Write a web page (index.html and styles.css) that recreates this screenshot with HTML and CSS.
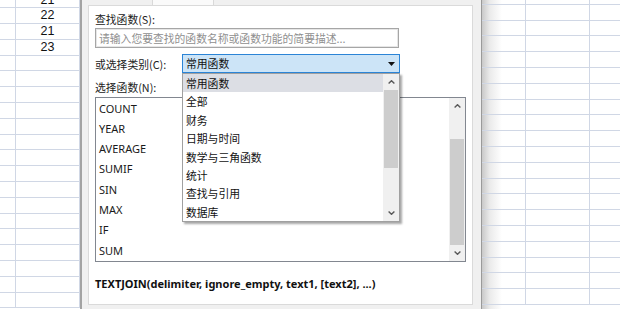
FILE: index.html
```html
<!DOCTYPE html>
<html lang="zh-CN">
<head>
<meta charset="utf-8">
<title>插入函数</title>
<link rel="stylesheet" href="styles.css">
</head>
<body>
<div class="screen">
  <div class="sheet sheet-left">
    <div class="row"><div class="cell c-a"></div><div class="cell c-b">21</div></div>
    <div class="row"><div class="cell c-a"></div><div class="cell c-b">22</div></div>
    <div class="row"><div class="cell c-a"></div><div class="cell c-b">21</div></div>
    <div class="row"><div class="cell c-a"></div><div class="cell c-b">23</div></div>
    <div class="row"><div class="cell c-a"></div><div class="cell c-b"></div></div>
    <div class="row"><div class="cell c-a"></div><div class="cell c-b"></div></div>
    <div class="row"><div class="cell c-a"></div><div class="cell c-b"></div></div>
    <div class="row"><div class="cell c-a"></div><div class="cell c-b"></div></div>
    <div class="row"><div class="cell c-a"></div><div class="cell c-b"></div></div>
    <div class="row"><div class="cell c-a"></div><div class="cell c-b"></div></div>
    <div class="row"><div class="cell c-a"></div><div class="cell c-b"></div></div>
    <div class="row"><div class="cell c-a"></div><div class="cell c-b"></div></div>
    <div class="row"><div class="cell c-a"></div><div class="cell c-b"></div></div>
    <div class="row"><div class="cell c-a"></div><div class="cell c-b"></div></div>
    <div class="row"><div class="cell c-a"></div><div class="cell c-b"></div></div>
    <div class="row"><div class="cell c-a"></div><div class="cell c-b"></div></div>
    <div class="row"><div class="cell c-a"></div><div class="cell c-b"></div></div>
    <div class="row"><div class="cell c-a"></div><div class="cell c-b"></div></div>
    <div class="row"><div class="cell c-a"></div><div class="cell c-b"></div></div>
    <div class="row"><div class="cell c-a"></div><div class="cell c-b"></div></div>
  </div>

  <div class="dialog">
    <div class="tabs">
      <div class="tab tab-a"></div>
      <div class="tab tab-b"></div>
    </div>
    <div class="panel">
      <div class="label">查找函数(S):</div>
      <div class="search">请输入您要查找的函数名称或函数功能的简要描述...</div>

      <div class="cat-row">
        <div class="label cat-label">或选择类别(C):</div>
        <div class="select">
          <span class="select-text">常用函数</span>
          <svg class="caret" width="7" height="4" viewBox="0 0 7 4"><polygon points="0,0 7,0 3.5,4" fill="#111"/></svg>
          <div class="dropdown">
            <ul class="dd-list">
              <li class="dd-item active">常用函数</li>
              <li class="dd-item">全部</li>
              <li class="dd-item">财务</li>
              <li class="dd-item">日期与时间</li>
              <li class="dd-item">数学与三角函数</li>
              <li class="dd-item">统计</li>
              <li class="dd-item">查找与引用</li>
              <li class="dd-item">数据库</li>
            </ul>
            <div class="scrollbar dd-scroll">
              <div class="arrow"><svg width="7" height="4" viewBox="0 0 7 4"><polyline points="0.6,3.5 3.5,0.7 6.4,3.5" fill="none" stroke="#5a5a5a" stroke-width="1.4"/></svg></div>
              <div class="track"><div class="thumb dd-thumb"></div></div>
              <div class="arrow"><svg width="7" height="4" viewBox="0 0 7 4"><polyline points="0.6,0.5 3.5,3.3 6.4,0.5" fill="none" stroke="#5a5a5a" stroke-width="1.4"/></svg></div>
            </div>
          </div>
        </div>
      </div>

      <div class="label fn-label">选择函数(N):</div>
      <div class="listbox">
        <ul class="fn-list">
          <li class="fn-item">COUNT</li>
          <li class="fn-item">YEAR</li>
          <li class="fn-item">AVERAGE</li>
          <li class="fn-item">SUMIF</li>
          <li class="fn-item">SIN</li>
          <li class="fn-item">MAX</li>
          <li class="fn-item">IF</li>
          <li class="fn-item">SUM</li>
        </ul>
        <div class="scrollbar fn-scroll">
          <div class="arrow"><svg width="7" height="4" viewBox="0 0 7 4"><polyline points="0.6,3.5 3.5,0.7 6.4,3.5" fill="none" stroke="#5a5a5a" stroke-width="1.4"/></svg></div>
          <div class="track fn-track"><div class="thumb fn-thumb"></div></div>
          <div class="arrow"><svg width="7" height="4" viewBox="0 0 7 4"><polyline points="0.6,0.5 3.5,3.3 6.4,0.5" fill="none" stroke="#5a5a5a" stroke-width="1.4"/></svg></div>
        </div>
      </div>

      <div class="signature">TEXTJOIN(delimiter, ignore_empty, text1, [text2], ...)</div>
    </div>
  </div>

  <div class="sheet sheet-right">
    <div class="row"><div class="cell r-a"></div><div class="cell r-b"></div><div class="cell r-c"></div></div>
    <div class="row"><div class="cell r-a"></div><div class="cell r-b"></div><div class="cell r-c"></div></div>
    <div class="row"><div class="cell r-a"></div><div class="cell r-b"></div><div class="cell r-c"></div></div>
    <div class="row"><div class="cell r-a"></div><div class="cell r-b"></div><div class="cell r-c"></div></div>
    <div class="row"><div class="cell r-a"></div><div class="cell r-b"></div><div class="cell r-c"></div></div>
    <div class="row"><div class="cell r-a"></div><div class="cell r-b"></div><div class="cell r-c"></div></div>
    <div class="row"><div class="cell r-a"></div><div class="cell r-b"></div><div class="cell r-c"></div></div>
    <div class="row"><div class="cell r-a"></div><div class="cell r-b"></div><div class="cell r-c"></div></div>
    <div class="row"><div class="cell r-a"></div><div class="cell r-b"></div><div class="cell r-c"></div></div>
    <div class="row"><div class="cell r-a"></div><div class="cell r-b"></div><div class="cell r-c"></div></div>
    <div class="row"><div class="cell r-a"></div><div class="cell r-b"></div><div class="cell r-c"></div></div>
    <div class="row"><div class="cell r-a"></div><div class="cell r-b"></div><div class="cell r-c"></div></div>
    <div class="row"><div class="cell r-a"></div><div class="cell r-b"></div><div class="cell r-c"></div></div>
    <div class="row"><div class="cell r-a"></div><div class="cell r-b"></div><div class="cell r-c"></div></div>
    <div class="row"><div class="cell r-a"></div><div class="cell r-b"></div><div class="cell r-c"></div></div>
    <div class="row"><div class="cell r-a"></div><div class="cell r-b"></div><div class="cell r-c"></div></div>
    <div class="row"><div class="cell r-a"></div><div class="cell r-b"></div><div class="cell r-c"></div></div>
    <div class="row"><div class="cell r-a"></div><div class="cell r-b"></div><div class="cell r-c"></div></div>
    <div class="row"><div class="cell r-a"></div><div class="cell r-b"></div><div class="cell r-c"></div></div>
    <div class="row"><div class="cell r-a"></div><div class="cell r-b"></div><div class="cell r-c"></div></div>
  </div>
</div>
</body>
</html>
```

FILE: styles.css
```css
* { box-sizing: border-box; }
html, body { margin: 0; padding: 0; background: #fff; }
body {
  width: 620px;
  height: 309px;
  overflow: hidden;
  font-family: "Noto Sans", "Noto Sans CJK SC", sans-serif;
  font-size: 12px;
  color: #1a1a1a;
}
ul { list-style: none; margin: 0; padding: 0; }

.screen {
  display: flex;
  width: 620px;
  height: 309px;
  overflow: hidden;
}

/* ---------- spreadsheet ---------- */
.sheet {
  display: flex;
  flex-direction: column;
  flex: none;
  overflow: hidden;
  height: 309px;
}
.row {
  display: flex;
  flex: none;
  height: 15.8px;
}
.cell {
  border-bottom: 1px solid #d0d7e5;
  border-right: 1px solid #d0d7e5;
  height: 100%;
}
.sheet-left {
  width: 80px;
  background: #fff;
}
.sheet-left .row:first-child { margin-top: -7.5px; }
.c-a { width: 16px; }
.c-b {
  width: 64px;
  text-align: center;
  font-family: "Liberation Sans", sans-serif;
  font-size: 12.5px;
  line-height: 15px;
  color: #111;
}

.sheet-right {
  flex: 1;
  background: linear-gradient(to right, #c9c9c9 0, #ebebeb 8px, #fff 20px);
}
.sheet-right .row:first-child { margin-top: -11px; }
.r-a { width: 44px; }
.r-b { width: 64px; }
.r-c { flex: 1; border-right: none; }

/* ---------- dialog ---------- */
.dialog {
  flex: none;
  width: 402px;
  height: 309px;
  background: #f0f0f0;
  border-left: 2px solid #a3a3a3;
  border-right: 1px solid #9a9a9a;
  padding-left: 6px;
  display: flex;
  flex-direction: column;
}
.tabs {
  display: flex;
  height: 5px;
  flex: none;
}
.tab { height: 5px; }
.tab-a { width: 64px; }
.tab-b {
  width: 62px;
  background: #fafafa;
  border-left: 1px solid #d9d9d9;
  border-right: 1px solid #d9d9d9;
}
.panel {
  width: 385px;
  height: 300px;
  background: #fff;
  border: 1px solid #dadada;
  padding: 5px 0 0 6px;
  display: flex;
  flex-direction: column;
  font-family: "Noto Sans CJK SC", "Noto Sans", sans-serif;
}
.label {
  height: 16px;
  line-height: 16px;
  font-size: 10.8px;
  color: #222;
}
.search {
  margin-top: 1px;
  width: 304px;
  height: 20px;
  border: 1px solid #a6a6a6;
  box-shadow: inset 0 0 0 1px #e6e6e6;
  padding-left: 3px;
  line-height: 18px;
  font-size: 10.8px;
  color: #8f8f8f;
  white-space: nowrap;
  overflow: hidden;
}

.cat-row {
  margin-top: 6px;
  display: flex;
  align-items: center;
  height: 19px;
}
.cat-label { width: 87px; flex: none; }
.select {
  position: relative;
  width: 218px;
  height: 19px;
  background: #cce4f7;
  border: 1px solid #2b84d6;
  display: flex;
  align-items: center;
  justify-content: space-between;
  padding: 0 4px 0 3px;
  font-size: 10.8px;
  color: #111;
}
.select-text { line-height: 17px; }
.caret { display: block; margin-top: 1px; }

.dropdown {
  position: absolute;
  left: -1px;
  top: 18px;
  width: 218px;
  height: 149px;
  background: #fff;
  border: 1px solid #a0a0a0;
  box-shadow: 2px 2px 2px rgba(0, 0, 0, 0.35);
  display: flex;
  z-index: 5;
}
.dd-list { flex: 1; }
.dd-item {
  height: 18.4px;
  line-height: 18.4px;
  padding-left: 3px;
  font-size: 10.8px;
  color: #111;
}
.dd-item.active { background: #dcdee4; }

.scrollbar {
  flex: none;
  width: 16px;
  background: #f0f0f0;
  display: flex;
  flex-direction: column;
}
.arrow {
  flex: none;
  height: 16px;
  display: flex;
  align-items: center;
  justify-content: center;
}
.arrow svg { display: block; }
.track {
  flex: 1;
  display: flex;
  flex-direction: column;
  padding: 0 1px;
}
.thumb { background: #cdcdcd; }
.dd-thumb { height: 78px; }

.fn-label { margin-top: 6px; }
.listbox {
  margin-top: 2px;
  width: 371px;
  height: 165px;
  border: 1px solid #828790;
  display: flex;
}
.fn-list { flex: 1; padding-top: 0.5px; }
.fn-item {
  height: 20.3px;
  line-height: 20.3px;
  padding-left: 3px;
  font-family: "Noto Sans", sans-serif;
  font-size: 11px;
  color: #1a1a1a;
}
.fn-scroll { width: 16px; }
.fn-track { justify-content: flex-end; padding-top: 25px; }
.fn-thumb { flex: 1; }

.signature {
  margin-top: 14px;
  height: 16px;
  line-height: 16px;
  font-family: "Noto Sans", sans-serif;
  font-weight: bold;
  font-size: 11px;
  color: #111;
  white-space: nowrap;
}
```
